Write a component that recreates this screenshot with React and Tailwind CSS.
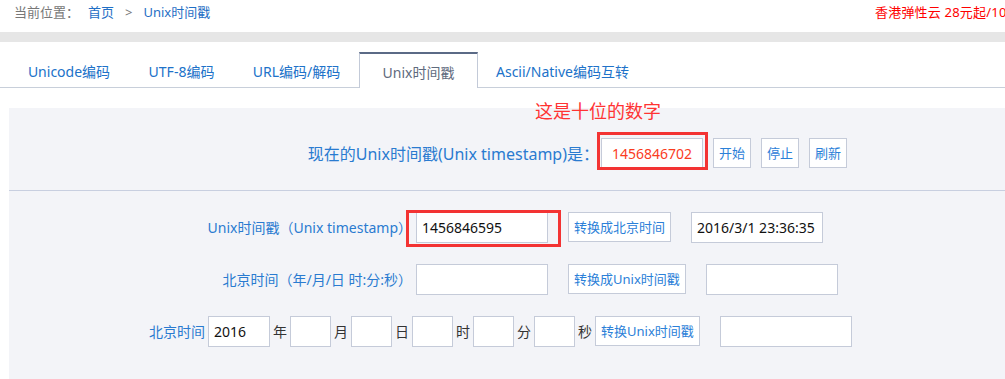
import React from "react";

const blue = "text-[#2a7bd0]";

function Btn({ children, className = "" }) {
  return (
    <button
      className={`shrink-0 h-[30px] px-[5px] border border-[#c5cbd9] bg-white text-[13px] leading-[28px] text-[#2b80d8] whitespace-nowrap ${className}`}
    >
      {children}
    </button>
  );
}

function Box({ w = "w-[132px]", value = "", className = "" }) {
  return (
    <input
      readOnly
      defaultValue={value}
      className={`shrink-0 ${w} h-[31px] border border-[#c5cbd9] bg-white px-[5px] text-[14px] text-[#111] outline-none ${className}`}
    />
  );
}

function Unit({ children }) {
  return (
    <span className="shrink-0 w-[20px] text-center text-[14px] leading-[31px] text-[#333]">
      {children}
    </span>
  );
}

export default function App() {
  const tabs = [
    { t: "Unicode编码", w: "w-[120px]" },
    { t: "UTF-8编码", w: "w-[105px]" },
    { t: "URL编码/解码", w: "w-[125px]" },
    { t: "Unix时间戳", w: "w-[119px]", active: true },
    { t: "Ascii/Native编码互转", w: "w-[169px]" },
  ];
  return (
    <div className="relative w-[1005px] h-[379px] overflow-hidden bg-white flex flex-col font-['Noto_Sans','Noto_Sans_CJK_SC',sans-serif]">
      {/* breadcrumb */}
      <div className="h-[32px] flex items-start pt-[3px] text-[13px] leading-[19px] whitespace-nowrap">
        <div className="shrink-0 w-[875px] flex pl-[14px]">
          <span className="text-[#777]">当前位置：</span>
          <span className="ml-[9px] text-[#1f6fc5]">首页</span>
          <span className="ml-[11px] text-[#777]">&gt;</span>
          <span className="ml-[11px] text-[#1f6fc5]">Unix时间戳</span>
        </div>
        <span className="shrink-0 text-[#ff0000] text-[13px] tracking-[0.2px]">香港弹性云 28元起/100G防御</span>
      </div>
      {/* gray band */}
      <div className="h-[10px] bg-[#e6e6e6]" />
      {/* tabs */}
      <div className="pt-[10px] pl-[9px] flex border-b border-[#c8cfda]">
        {tabs.map((tab) =>
          tab.active ? (
            <div
              key={tab.t}
              className={`shrink-0 ${tab.w} h-[36px] -mb-px flex items-center justify-center bg-white border-t-2 border-x border-t-[#5b6a86] border-x-[#c3cad8] text-[14px] text-[#5f6b7e] pt-[2px]`}
            >
              {tab.t}
            </div>
          ) : (
            <div
              key={tab.t}
              className={`shrink-0 ${tab.w} h-[35px] flex items-center justify-center text-[14px] text-[#2072c9] pt-[3px]`}
            >
              {tab.t}
            </div>
          )
        )}
      </div>
      <div className="h-[20px]" />
      {/* panel */}
      <div className="ml-[9px] flex-1 bg-[#f3f4f8]">
        <div className="h-[82px] flex items-start pt-[30px]">
          <div className={`shrink-0 w-[592px] pr-[2px] text-right text-[16px] leading-[32px] ${blue} whitespace-nowrap`}>
            现在的Unix时间戳(Unix timestamp)是：
          </div>
          <input
            readOnly
            defaultValue="1456846702"
            className="shrink-0 w-[102px] h-[30px] border border-[#c5cbd9] bg-white text-center text-[14px] text-[#fa3c1e] outline-none"
          />
          <Btn className="ml-[10px]">开始</Btn>
          <Btn className="ml-[10px]">停止</Btn>
          <Btn className="ml-[10px]">刷新</Btn>
        </div>
        <div className="border-t border-[#c8cfe0] pt-[21px] flex flex-col gap-[21px]">
          <div className="flex items-start">
            <div className={`shrink-0 w-[403px] text-right text-[14px] leading-[31px] ${blue} whitespace-nowrap`}>
              Unix时间戳（Unix timestamp）
            </div>
            <Box className="ml-[4px]" value="1456846595" />
            <Btn className="ml-[20px]">转换成北京时间</Btn>
            <Box className="ml-[20px]" value="2016/3/1 23:36:35" />
          </div>
          <div className="flex items-start">
            <div className={`shrink-0 w-[403px] text-right text-[14px] leading-[31px] ${blue} whitespace-nowrap`}>
              北京时间（年/月/日 时:分:秒）
            </div>
            <Box className="ml-[4px]" />
            <Btn className="ml-[20px]">转换成Unix时间戳</Btn>
            <Box className="ml-[20px]" />
          </div>
          <div className="flex items-start pl-[140px]">
            <span className={`shrink-0 text-[14px] leading-[31px] ${blue}`}>北京时间</span>
            <Box className="ml-[3px]" w="w-[62px]" value="2016" />
            <Unit>年</Unit>
            <Box w="w-[41px]" />
            <Unit>月</Unit>
            <Box w="w-[41px]" />
            <Unit>日</Unit>
            <Box w="w-[41px]" />
            <Unit>时</Unit>
            <Box w="w-[41px]" />
            <Unit>分</Unit>
            <Box w="w-[41px]" />
            <Unit>秒</Unit>
            <Btn>转换Unix时间戳</Btn>
            <Box className="ml-[20px]" />
          </div>
        </div>
      </div>
      {/* annotations */}
      <div className="absolute left-[535px] top-[100px] text-[18px] leading-[23px] text-[#ff3333] whitespace-nowrap">
        这是十位的数字
      </div>
      <div className="absolute left-[597px] top-[132px] w-[111px] h-[38px] border-[3px] border-[#f33333] pointer-events-none" />
      <div className="absolute left-[406px] top-[210px] w-[155px] h-[37px] border-[3px] border-[#f33333] pointer-events-none" />
    </div>
  );
}
